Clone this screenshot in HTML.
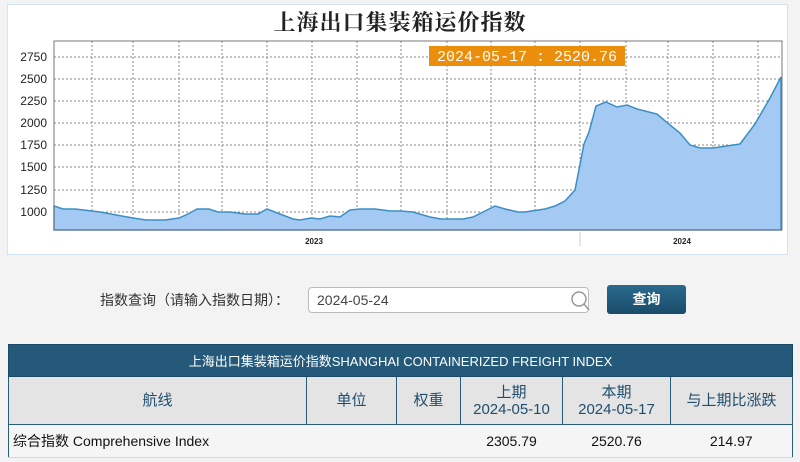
<!DOCTYPE html>
<html><head><meta charset="utf-8"><style>
*{margin:0;padding:0;box-sizing:border-box}
body{width:800px;height:462px;background:#f3f3f3;font-family:"Liberation Sans","Noto Sans CJK SC",sans-serif;position:relative;overflow:hidden}
.chart{position:absolute;left:7px;top:4px;width:781px;height:251px;background:#fff;border:1px solid #d4e4f4}
.title{position:absolute;left:0;top:6px;width:800px;text-align:center;font-family:"Noto Serif CJK SC",serif;font-size:22px;font-weight:bold;color:#222;letter-spacing:1px}
.lab{position:absolute;font-size:14px;color:#333;left:100px;top:290px}
.inp{position:absolute;left:308px;top:287px;width:281px;height:26px;background:#fff;border:1px solid #bbb;border-radius:4px;font-size:14px;color:#444;padding:4px 8px}
.btn{position:absolute;left:607px;top:285px;width:79px;height:29px;background:linear-gradient(#2a6a8c,#1a4c6a);border-radius:3px;color:#fff;font-size:14px;text-align:center;line-height:29px;font-weight:bold}
table{position:absolute;left:8px;top:344px;width:785px;border-collapse:collapse;font-size:14px}
th.h{background:#24597a;color:#fff;font-weight:normal;height:32px;font-size:13px;border:1px solid #1b4a66}
tr.g td{background:#e4e4e4;color:#1f4e6e;text-align:center;height:48px;border:1px solid #2a5c7c;line-height:17px;font-size:15px}
tr.d td{background:#f5f5f5;color:#111;height:33px;text-align:center;border-bottom:1px solid #cfd8e0}
</style></head><body>
<div class="chart"></div>
<div class="title">上海出口集装箱运价指数</div>
<svg style="position:absolute;left:0;top:0" width="800" height="260">
<g stroke="#888" stroke-dasharray="2,2" stroke-width="1">
<line x1="54" x2="782" y1="57" y2="57"/><line x1="54" x2="782" y1="79" y2="79"/><line x1="54" x2="782" y1="101" y2="101"/><line x1="54" x2="782" y1="123" y2="123"/><line x1="54" x2="782" y1="145" y2="145"/><line x1="54" x2="782" y1="167" y2="167"/><line x1="54" x2="782" y1="190" y2="190"/><line x1="54" x2="782" y1="212" y2="212"/>
<line x1="92" x2="92" y1="41" y2="230"/><line x1="133" x2="133" y1="41" y2="230"/><line x1="179" x2="179" y1="41" y2="230"/><line x1="222" x2="222" y1="41" y2="230"/><line x1="267" x2="267" y1="41" y2="230"/><line x1="312" x2="312" y1="41" y2="230"/><line x1="357" x2="357" y1="41" y2="230"/><line x1="401" x2="401" y1="41" y2="230"/><line x1="447" x2="447" y1="41" y2="230"/><line x1="491" x2="491" y1="41" y2="230"/><line x1="535" x2="535" y1="41" y2="230"/><line x1="580" x2="580" y1="41" y2="230"/><line x1="626" x2="626" y1="41" y2="230"/><line x1="668" x2="668" y1="41" y2="230"/><line x1="713" x2="713" y1="41" y2="230"/><line x1="758" x2="758" y1="41" y2="230"/>
</g>
<path d="M54,206 L63,209 L75,209 L92,211 L100,212 L133,218 L146,220 L165,220 L179,218 L188,214 L197,209 L209,209 L218,212 L230,212 L245,214 L258,214 L267,209 L280,214 L293,219 L300,220 L311,218 L320,219 L330,216 L340,217 L350,210 L360,209 L375,209 L390,211 L400,211 L413,212 L430,217 L441,219 L463,219 L473,217 L483,212 L495,206 L505,209 L518,212 L525,212 L545,209 L555,206 L565,201 L575,190 L584,144 L589,132 L596,106 L606,102 L617,107 L627,105 L637,109 L657,114 L670,125 L680,133 L690,145 L700,148 L713,148 L740,144 L755,124 L770,98 L781,77 L781,230 L54,230 Z" fill="#a4c9f2" stroke="#3b8fc4" stroke-width="1.5"/>
<rect x="54" y="41" width="728" height="189" fill="none" stroke="#777"/>
<g font-size="12" fill="#222" text-anchor="end" font-family="Liberation Sans,sans-serif">
<text x="47" y="61">2750</text><text x="47" y="83">2500</text><text x="47" y="105">2250</text><text x="47" y="127">2000</text><text x="47" y="149">1750</text><text x="47" y="171">1500</text><text x="47" y="194">1250</text><text x="47" y="216">1000</text></g>
<g font-size="8" font-weight="bold" fill="#222" text-anchor="middle"><text x="314" y="244">2023</text><text x="682" y="244">2024</text></g>
<line x1="580" x2="580" y1="232" y2="246" stroke="#ccc"/>
<rect x="429" y="46" width="196" height="20" fill="#eb8e0b"/>
<text x="527" y="61" text-anchor="middle" fill="#fff" font-size="15" font-family="Liberation Mono,monospace">2024-05-17 : 2520.76</text>
</svg>
<div class="lab">指数查询（请输入指数日期）：</div>
<div class="inp">2024-05-24</div>
<svg style="position:absolute;left:569px;top:290px" width="24" height="22"><circle cx="10" cy="9" r="7" fill="none" stroke="#999" stroke-width="1.5"/><line x1="15" y1="14" x2="20" y2="20" stroke="#999" stroke-width="1.5"/></svg>
<div class="btn">查询</div>
<table>
<tr><th class="h" colspan="6">上海出口集装箱运价指数SHANGHAI CONTAINERIZED FREIGHT INDEX</th></tr>
<tr class="g"><td style="width:298px">航线</td><td style="width:90px">单位</td><td style="width:64px">权重</td><td style="width:102px">上期<br>2024-05-10</td><td style="width:108px">本期<br>2024-05-17</td><td>与上期比涨跌</td></tr>
<tr class="d"><td style="text-align:left;padding-left:4px;border-left:1px solid #2a5c7c">综合指数 Comprehensive Index</td><td></td><td></td><td>2305.79</td><td>2520.76</td><td style="border-right:1px solid #2a5c7c">214.97</td></tr>
</table>
</body></html>
